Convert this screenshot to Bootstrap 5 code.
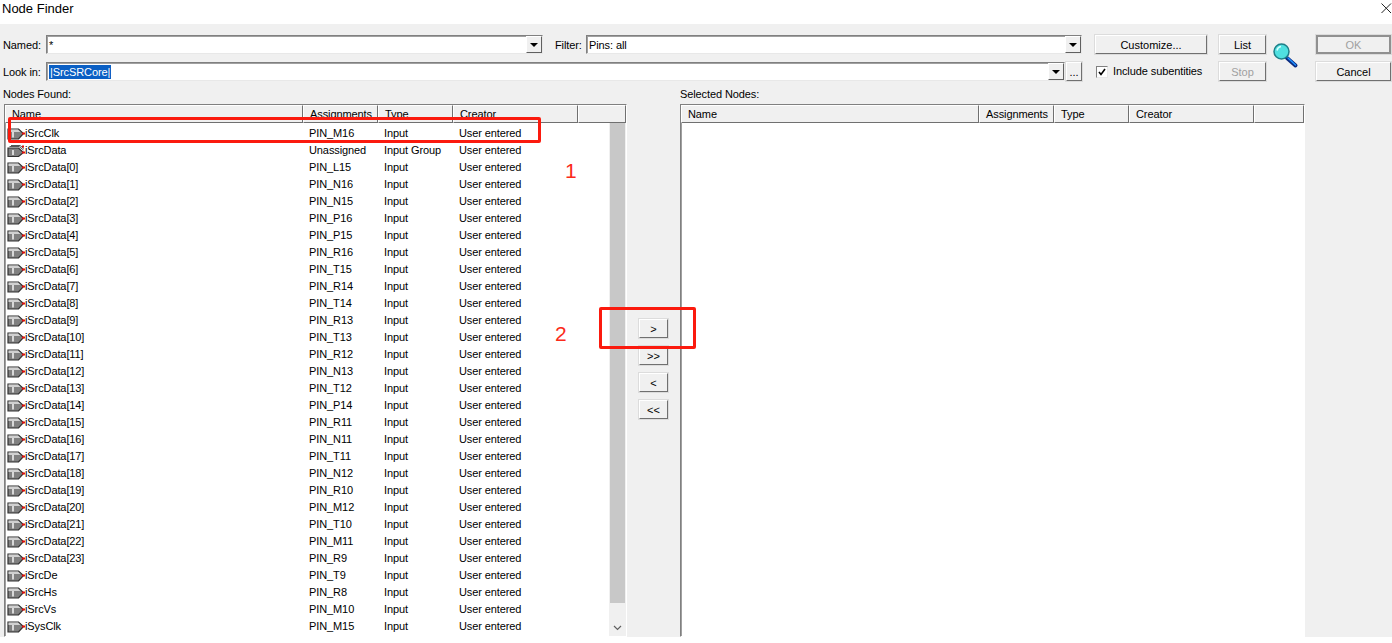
<!DOCTYPE html>
<html lang="en">
<head>
    <meta charset="UTF-8">
    <meta name="viewport" content="width=device-width, initial-scale=1.0">
    <title>Node Finder</title>
    <link href="https://cdn.jsdelivr.net/npm/bootstrap@5.3.0/dist/css/bootstrap.min.css" rel="stylesheet">
    <style>
        body {
            background-color: #fff;
            font-family: "Liberation Sans", Arial, sans-serif;
            font-size: 11px;
            line-height: 17px;
            letter-spacing: -0.1px;
            color: #000;
            overflow: hidden;
        }
        .page-wrap { position: relative; width: 1392px; height: 643px; overflow: hidden; }
        .title-bar { height: 24px; padding-left: 2px; font-size: 13px; line-height: 17px; letter-spacing: 0; }
        .close-x { position: absolute; top: 3px; right: 0; }
        .dialog { background-color: #f0f0f0; height: 613px; padding-top: 11px; }

        .top-form {
            display: grid;
            grid-template-columns: 46px 497px 43px 496px 13px 112px 12px 47px 50px 75px;
            grid-template-rows: 19px 19px;
            row-gap: 8px;
            align-items: center;
        }
        .lbl { padding-left: 3px; padding-top: 2px; white-space: nowrap; }
        .filter-lbl { padding-left: 12px; }
        .combo {
            display: flex;
            height: 19px;
            background: #fff;
            border: 1px solid;
            border-color: #808080 #e8e8e8 #e8e8e8 #808080;
            box-shadow: inset 1px 1px 0 #a0a0a0;
            padding-left: 2px;
            line-height: 19px;
            overflow: hidden;
        }
        .combo-text { flex-grow: 1; white-space: nowrap; }
        .combo-text .sel { background: #0a5fc4; color: #fff; padding: 1px; }
        .combo-arrow {
            width: 16px;
            background: #f0f0f0;
            border: 1px solid;
            border-color: #fff #606060 #606060 #fff;
            display: flex;
            align-items: center;
            justify-content: center;
            flex-shrink: 0;
        }
        .combo-arrow::after {
            content: "";
            border-left: 4px solid transparent;
            border-right: 4px solid transparent;
            border-top: 4px solid #000;
        }
        .win-btn {
            --bs-btn-padding-x: 0;
            --bs-btn-padding-y: 0;
            --bs-btn-font-size: 11px;
            --bs-btn-line-height: 16px;
            --bs-btn-color: #000;
            --bs-btn-bg: #f0f0f0;
            --bs-btn-border-width: 1px;
            --bs-btn-border-radius: 0;
            --bs-btn-hover-bg: #f0f0f0;
            font-family: inherit;
            height: 19px;
            width: 100%;
            border-color: #fff #707070 #707070 #fff;
            box-shadow: 0 0 0 1px #dcdcdc;
        }
        .win-btn.off { color: #a0a0a0; }
        .ok-btn { border-color: #909090; border-width: 2px; }
        .dots-btn { width: 16px; flex-shrink: 0; margin-left: 1px; }
        .look-in { display: flex; }
        .look-in .combo { width: 1020px; }
        .chk-wrap { display: flex; align-items: center; gap: 5px; padding-left: 1px; white-space: nowrap; }
        .chk-box {
            width: 12px; height: 12px; background: #fff;
            border: 1px solid; border-color: #808080 #e8e8e8 #e8e8e8 #808080;
            flex-shrink: 0; display: flex;
        }
        .mag-cell { grid-column: 9; grid-row: 1 / span 2; padding-left: 7px; padding-top: 8px; align-self: start; }

        .lists { display: flex; padding-left: 4px; margin-top: 4px; }
        .list-col { width: 623px; }
        .list-col-r { width: 625px; }
        .list-lbl { height: 19px; line-height: 18px; margin-left: -1px; }
        .list-col-r .list-lbl { margin-left: 0; }
        .move-col { width: 53px; padding: 234px 0 0 12px; display: flex; flex-direction: column; gap: 8px; }
        .move-col .win-btn { width: 29px; }
        .lv {
            height: 533px;
            background: #fff;
            border: 1px solid;
            border-color: #808080 #fff #fff #808080;
            box-shadow: inset 1px 0 0 #a0a0a0;
            display: flex;
            flex-direction: column;
        }
        .lv-head { display: flex; height: 18px; flex-shrink: 0; background: #f0f0f0; }
        .lv-head div {
            border: 1px solid;
            border-color: #fff #707070 #707070 #fff;
            padding-left: 6px;
            line-height: 16px;
            white-space: nowrap;
        }
        .c-name { width: 298px; }
        .c-asg { width: 75px; }
        .c-type { width: 75px; }
        .c-crt { width: 125px; }
        .lv-head .c-end { flex-grow: 1; }
        .lv-body { display: flex; flex-grow: 1; min-height: 0; }
        .lv-rows { flex-grow: 1; padding-top: 2px; }
        .lv-row { display: flex; height: 17px; line-height: 17px; white-space: nowrap; }
        .lv-row > div { padding-left: 6px; }
        .lv-row .c-name { display: flex; align-items: center; padding-left: 2px; gap: 0; }
        .lv-row .c-name svg { flex-shrink: 0; }
        .scroll-track { width: 17px; background: #f0f0f0; display: flex; flex-direction: column; }
        .scroll-thumb { height: 480px; background: #c8c8c8; margin: 0 1px; }
        .scroll-rest { flex-grow: 1; }
        .scroll-down { height: 17px; display: flex; align-items: center; justify-content: center; }

        .note-box { position: absolute; border: 3px solid #fb1a0e; border-radius: 2px; }
        .note-1 { left: 8px; top: 117px; width: 533px; height: 26px; }
        .note-2 { left: 599px; top: 307px; width: 97px; height: 42px; }
        .note-num { position: absolute; color: #fb2a1a; font-size: 21px; line-height: 24px; letter-spacing: 0; }
        .num-1 { left: 565px; top: 159px; }
        .num-2 { left: 555px; top: 322px; }
    </style>
</head>
<body>
    <div class="page-wrap">
        <div class="title-bar">Node Finder</div>
        <svg class="close-x" width="11" height="11" viewBox="0 0 11 11"><path d="M0.5 0.5L10 10M10 0.5L0.5 10" stroke="#222" fill="none"/></svg>

        <div class="dialog">
            <!-- Filtros -->
            <div class="top-form">
                <div class="lbl">Named:</div>
                <div class="combo"><span class="combo-text">*</span><span class="combo-arrow"></span></div>
                <div class="lbl filter-lbl">Filter:</div>
                <div class="combo"><span class="combo-text">Pins: all</span><span class="combo-arrow"></span></div>
                <div></div>
                <button type="button" class="btn win-btn">Customize...</button>
                <div></div>
                <button type="button" class="btn win-btn">List</button>
                <div class="mag-cell">
                    <svg width="26" height="26" viewBox="0 0 26 26">
                        <path d="M14 15L22.500 22.500" stroke="#0a2a80" stroke-width="4" stroke-linecap="round"/>
                        <path d="M15 15L22.500 22" stroke="#1e90ff" stroke-width="1.500" stroke-linecap="round"/>
                        <circle cx="8.500" cy="8.500" r="7.500" fill="#4fe0e0" stroke="#1f7f88" stroke-width="1.500"/>
                        <path d="M4 7.500A5 5 0 0 1 8 3.500" stroke="#d8ffff" stroke-width="1.500" fill="none"/>
                    </svg>
                </div>
                <button type="button" class="btn win-btn off ok-btn">OK</button>

                <div class="lbl">Look in:</div>
                <div class="look-in" style="grid-column: 2 / span 3">
                    <div class="combo"><span class="combo-text"><span class="sel">|SrcSRCore|</span></span><span class="combo-arrow"></span></div>
                    <button type="button" class="btn win-btn dots-btn">...</button>
                </div>
                <div></div>
                <div class="chk-wrap" style="grid-column: 6 / span 2">
                    <span class="chk-box"><svg width="10" height="10" viewBox="0 0 10 10"><path d="M2 5L4 7.500L8 2" stroke="#000" stroke-width="1.600" fill="none"/></svg></span>
                    <span>Include subentities</span>
                </div>
                <button type="button" class="btn win-btn off" style="grid-column: 8">Stop</button>
                <button type="button" class="btn win-btn" style="grid-column: 10">Cancel</button>
            </div>

            <div class="lists">
                <div class="list-col">
                    <div class="list-lbl">Nodes Found:</div>
                    <div class="lv">
                        <div class="lv-head">
                            <div class="c-name">Name</div>
                            <div class="c-asg">Assignments</div>
                            <div class="c-type">Type</div>
                            <div class="c-crt">Creator</div>
                            <div class="c-end"></div>
                        </div>
                        <div class="lv-body">
                            <div class="lv-rows" id="nodeRows"></div>
                            <div class="scroll-track">
                                <div class="scroll-thumb"></div>
                                <div class="scroll-rest"></div>
                                <div class="scroll-down">
                                    <svg width="9" height="6" viewBox="0 0 9 6"><path d="M1 1L4.500 4.500L8 1" stroke="#606060" stroke-width="1.200" fill="none"/></svg>
                                </div>
                            </div>
                        </div>
                    </div>
                </div>

                <div class="move-col">
                    <button type="button" class="btn win-btn">&gt;</button>
                    <button type="button" class="btn win-btn">&gt;&gt;</button>
                    <button type="button" class="btn win-btn">&lt;</button>
                    <button type="button" class="btn win-btn">&lt;&lt;</button>
                </div>

                <div class="list-col-r">
                    <div class="list-lbl">Selected Nodes:</div>
                    <div class="lv">
                        <div class="lv-head">
                            <div class="c-name">Name</div>
                            <div class="c-asg">Assignments</div>
                            <div class="c-type">Type</div>
                            <div class="c-crt">Creator</div>
                            <div class="c-end"></div>
                        </div>
                    </div>
                </div>
            </div>
        </div>

        <!-- Anotaciones en rojo -->
        <div class="note-box note-1"></div>
        <div class="note-box note-2"></div>
        <div class="note-num num-1">1</div>
        <div class="note-num num-2">2</div>
    </div>

    <script src="https://cdn.jsdelivr.net/npm/bootstrap@5.3.0/dist/js/bootstrap.bundle.min.js"></script>
    <script>
        const pins = ["M16", null, "L15", "N16", "N15", "P16", "P15", "R16", "T15", "R14", "T14", "R13", "T13", "R12",
            "N13", "T12", "P14", "R11", "N11", "T11", "N12", "R10", "M12", "T10", "M11", "R9", "T9", "R8", "M10", "M15"];
        const names = ["iSrcClk", "iSrcData"];
        for (let i = 0; i < 24; i++) names.push(`iSrcData[${i}]`);
        names.push("iSrcDe", "iSrcHs", "iSrcVs", "iSysClk");

        const pinIcon = `<svg width="18" height="12" viewBox="0 0 18 12">
            <path d="M1 1H11.500L16.500 5.500L11.500 11H1Z" fill="#808080" stroke="#303030" stroke-width="1.200"/>
            <path d="M1.500 1.500H11L13.500 4H1.500Z" fill="#d0d0d0"/>
            <path d="M6 4V9.500" stroke="#fff" stroke-width="1.400"/>
            <path d="M15 4.500H18V6.500H15Z" fill="#e01010"/>
        </svg>`;
        const groupIcon = `<svg width="18" height="12" viewBox="0 0 18 12">
            <path d="M4 0.500H13L17 3.500" fill="none" stroke="#555"/>
            <path d="M2.500 1.500H12L16.500 5" fill="none" stroke="#555"/>
            <path d="M1 3H11.500L16.500 7.500L11.500 11.500H1Z" fill="#808080" stroke="#303030" stroke-width="1.200"/>
            <path d="M6 5V10" stroke="#fff" stroke-width="1.400"/>
            <path d="M15 0.500H17V2.500H15ZM15 6.500H18V8.500H15Z" fill="#e01010"/>
        </svg>`;

        const rows = document.getElementById("nodeRows");
        names.forEach((name, i) => {
            const row = document.createElement("div");
            row.className = "lv-row";
            row.innerHTML = `
                <div class="c-name">${pins[i] ? pinIcon : groupIcon}<span>${name}</span></div>
                <div class="c-asg">${pins[i] ? "PIN_" + pins[i] : "Unassigned"}</div>
                <div class="c-type">${pins[i] ? "Input" : "Input Group"}</div>
                <div class="c-crt">User entered</div>`;
            rows.appendChild(row);
        });
    </script>
</body>
</html>
